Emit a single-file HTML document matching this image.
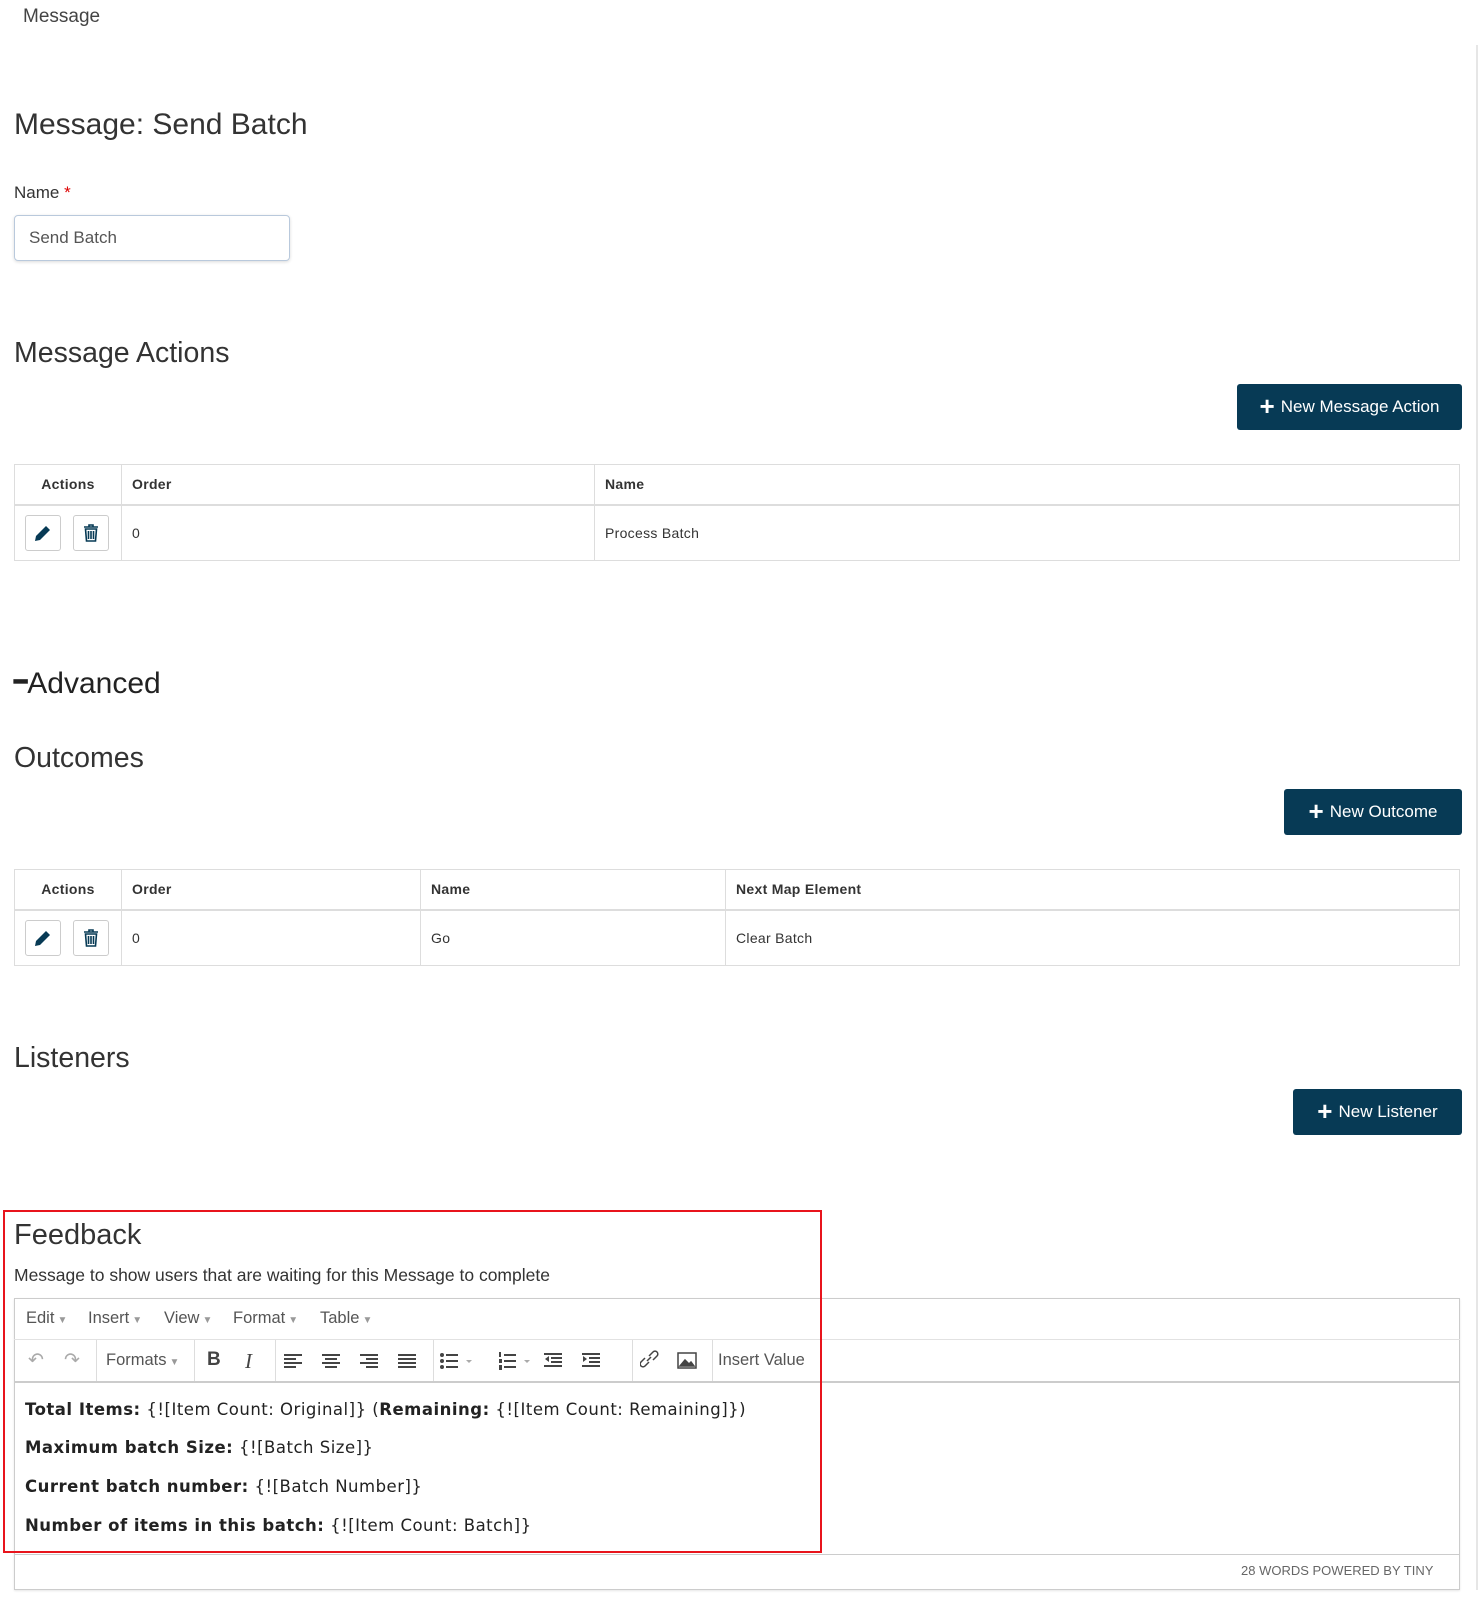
<!DOCTYPE html>
<html><head><meta charset="utf-8"><style>
*{box-sizing:border-box;margin:0;padding:0}
body{width:1481px;height:1610px;background:#fff;font-family:"Liberation Sans",sans-serif;color:#333;position:relative;overflow:hidden}
.a{position:absolute;white-space:nowrap}
h{position:absolute;font-weight:400;color:#333;white-space:nowrap}
.btn{position:absolute;background:#073a55;color:#fff;font-size:17px;border-radius:3px;display:flex;align-items:center;justify-content:center;gap:6px}
.btn b{font-size:26px;font-weight:700;line-height:1;margin-top:-3px}
table{position:absolute;border-collapse:collapse;font-size:14px;color:#333;table-layout:fixed}
td,th{border:1px solid #ddd;text-align:left;padding:0 10px;white-space:nowrap}
th{height:40px;font-weight:700;border-bottom:2px solid #ddd;letter-spacing:0.3px}
td{height:56px;letter-spacing:0.3px}
.ib{display:inline-block;width:36px;height:36px;border:1px solid #ccc;border-radius:3px;vertical-align:middle;position:relative}
.ib+.ib{margin-left:12px}
.ib svg{position:absolute;left:7px;top:7px}
.mb{position:absolute;font-size:16.5px;color:#555}
.mb i{font-style:normal;color:#999;font-size:10px;margin-left:3px}
.ed p{position:absolute;left:25px;font-family:"DejaVu Sans",sans-serif;font-size:16.5px;color:#222;white-space:nowrap;letter-spacing:0.5px}
</style></head><body>
<div class="a" style="left:23px;top:6px;font-size:19px;color:#444">Message</div>
<div class="a" style="left:1476px;top:45px;width:2px;height:1545px;background:#e6e6e6"></div>
<h style="left:14px;top:108px;font-size:30px">Message: Send Batch</h>
<div class="a" style="left:14px;top:183px;font-size:17px">Name <span style="color:#d00">*</span></div>
<div class="a" style="left:14px;top:215px;width:276px;height:46px;border:1px solid #b9c9dc;border-radius:4px;box-shadow:0 1px 3px rgba(0,0,0,.15);padding:12px 14px;font-size:17px;color:#555">Send Batch</div>
<h style="left:14px;top:337px;font-size:28.5px">Message Actions</h>
<div class="btn" style="left:1237px;top:384px;width:225px;height:46px"><b>+</b>New Message Action</div>
<table style="left:14px;top:464px;width:1446px">
<tr><th style="width:107px;text-align:center">Actions</th><th style="width:473px">Order</th><th>Name</th></tr>
<tr><td><span class="ib"><svg width="20" height="20" viewBox="0 0 20 20"><path d="M2 18l1-5L13 3l4 4L7 17z" fill="#073a55"/></svg></span><span class="ib"><svg width="20" height="20" viewBox="0 0 20 20" fill="none" stroke="#073a55" stroke-width="1.6"><path d="M3 4h14M8 4V2h4v2M4.5 6h11l-1 12h-9z"/><path d="M7.5 8v8M10 8v8M12.5 8v8"/></svg></span></td><td>0</td><td>Process Batch</td></tr>
</table>
<h style="left:14px;top:667px;font-size:30px;color:#222"><b style="font-size:22px;position:relative;top:-4px">━</b>Advanced</h>
<h style="left:14px;top:742px;font-size:28.5px">Outcomes</h>
<div class="btn" style="left:1284px;top:789px;width:178px;height:46px"><b>+</b>New Outcome</div>
<table style="left:14px;top:869px;width:1446px">
<tr><th style="width:107px;text-align:center">Actions</th><th style="width:299px">Order</th><th style="width:305px">Name</th><th>Next Map Element</th></tr>
<tr><td><span class="ib"><svg width="20" height="20" viewBox="0 0 20 20"><path d="M2 18l1-5L13 3l4 4L7 17z" fill="#073a55"/></svg></span><span class="ib"><svg width="20" height="20" viewBox="0 0 20 20" fill="none" stroke="#073a55" stroke-width="1.6"><path d="M3 4h14M8 4V2h4v2M4.5 6h11l-1 12h-9z"/><path d="M7.5 8v8M10 8v8M12.5 8v8"/></svg></span></td><td>0</td><td>Go</td><td>Clear Batch</td></tr>
</table>
<h style="left:14px;top:1042px;font-size:28.5px">Listeners</h>
<div class="btn" style="left:1293px;top:1089px;width:169px;height:46px"><b>+</b>New Listener</div>
<h style="left:14px;top:1219px;font-size:29px">Feedback</h>
<div class="a" style="left:14px;top:1265px;font-size:17.5px">Message to show users that are waiting for this Message to complete</div>
<div class="a" style="left:14px;top:1298px;width:1446px;height:292px;border:1px solid #ccc;box-shadow:0 1px 2px rgba(0,0,0,.1)"></div>
<div class="a" style="left:14px;top:1339px;width:1446px;height:1px;background:#e2e2e2"></div>
<div class="a" style="left:14px;top:1381px;width:1446px;height:2px;background:#ccc"></div>
<div class="a" style="left:14px;top:1554px;width:1446px;height:1px;background:#ccc"></div>
<div class="mb" style="left:26px;top:1309px">Edit<i>▼</i></div>
<div class="mb" style="left:88px;top:1309px">Insert<i>▼</i></div>
<div class="mb" style="left:164px;top:1309px">View<i>▼</i></div>
<div class="mb" style="left:233px;top:1309px">Format<i>▼</i></div>
<div class="mb" style="left:320px;top:1309px">Table<i>▼</i></div>
<div class="a" style="left:96px;top:1340px;width:1px;height:41px;background:#ddd"></div>
<div class="a" style="left:194px;top:1340px;width:1px;height:41px;background:#ddd"></div>
<div class="a" style="left:275px;top:1340px;width:1px;height:41px;background:#ddd"></div>
<div class="a" style="left:433px;top:1340px;width:1px;height:41px;background:#ddd"></div>
<div class="a" style="left:632px;top:1340px;width:1px;height:41px;background:#ddd"></div>
<div class="a" style="left:712px;top:1340px;width:1px;height:41px;background:#ddd"></div>
<div class="mb" style="left:28px;top:1349px;color:#aaa;font-size:19px">↶</div>
<div class="mb" style="left:64px;top:1349px;color:#aaa;font-size:19px">↷</div>
<div class="mb" style="left:106px;top:1351px">Formats<i>▼</i></div>
<div class="mb" style="left:207px;top:1349px;font-weight:700;font-size:19px;color:#444">B</div>
<div class="mb" style="left:245px;top:1349px;font-style:italic;font-family:'Liberation Serif';font-size:21px;color:#444">I</div>
<svg class="a" style="left:284px;top:1352px" width="320" height="20" fill="#444">
<g><rect x="0" y="2" width="18" height="2"/><rect x="0" y="6" width="12" height="2"/><rect x="0" y="10" width="18" height="2"/><rect x="0" y="14" width="12" height="2"/></g>
<g transform="translate(38)"><rect x="0" y="2" width="18" height="2"/><rect x="3" y="6" width="12" height="2"/><rect x="0" y="10" width="18" height="2"/><rect x="3" y="14" width="12" height="2"/></g>
<g transform="translate(76)"><rect x="0" y="2" width="18" height="2"/><rect x="6" y="6" width="12" height="2"/><rect x="0" y="10" width="18" height="2"/><rect x="6" y="14" width="12" height="2"/></g>
<g transform="translate(114)"><rect x="0" y="2" width="18" height="2"/><rect x="0" y="6" width="18" height="2"/><rect x="0" y="10" width="18" height="2"/><rect x="0" y="14" width="18" height="2"/></g>
<g transform="translate(156)"><circle cx="2" cy="3" r="2"/><circle cx="2" cy="9" r="2"/><circle cx="2" cy="15" r="2"/><rect x="6" y="2" width="12" height="2"/><rect x="6" y="8" width="12" height="2"/><rect x="6" y="14" width="12" height="2"/><path d="M26 8h6l-3 3z" fill="#aaa"/></g>
<g transform="translate(214)"><rect x="6" y="2" width="12" height="2"/><rect x="6" y="8" width="12" height="2"/><rect x="6" y="14" width="12" height="2"/><rect x="1" y="0" width="2" height="5"/><rect x="1" y="7" width="3" height="4"/><rect x="1" y="13" width="3" height="5"/><path d="M26 8h6l-3 3z" fill="#aaa"/></g>
<g transform="translate(260)"><rect x="0" y="1" width="18" height="2"/><rect x="7" y="5" width="11" height="2"/><rect x="7" y="9" width="11" height="2"/><rect x="0" y="13" width="18" height="2"/><path d="M5 4v6l-4-3z"/></g>
<g transform="translate(298)"><rect x="0" y="1" width="18" height="2"/><rect x="7" y="5" width="11" height="2"/><rect x="7" y="9" width="11" height="2"/><rect x="0" y="13" width="18" height="2"/><path d="M1 4v6l4-3z"/></g>
</svg>
<svg class="a" style="left:640px;top:1350px" width="60" height="22" fill="none" stroke="#444" stroke-width="1.5"><path d="M9 12l-4 4a2.5 2.5 0 0 1-4-4l4-4M9 6l4-4a2.5 2.5 0 0 1 4 4l-4 4M7 11l4-4"/><rect x="38" y="3" width="18" height="15"/><path d="M40 16l5-6 4 4 2-2 3 4z" fill="#444"/></svg>
<div class="mb" style="left:718px;top:1351px;color:#555">Insert Value</div>
<div class="ed">
<p style="top:1400px"><b>Total Items:</b> {![Item Count: Original]} (<b>Remaining:</b> {![Item Count: Remaining]})</p>
<p style="top:1438px"><b>Maximum batch Size:</b> {![Batch Size]}</p>
<p style="top:1477px"><b>Current batch number:</b> {![Batch Number]}</p>
<p style="top:1516px"><b>Number of items in this batch:</b> {![Item Count: Batch]}</p>
</div>
<div class="a" style="left:1241px;top:1563px;font-size:13px;color:#666">28 WORDS POWERED BY TINY</div>
<div class="a" style="left:3px;top:1210px;width:819px;height:343px;border:2px solid #e8141c"></div>
</body></html>
